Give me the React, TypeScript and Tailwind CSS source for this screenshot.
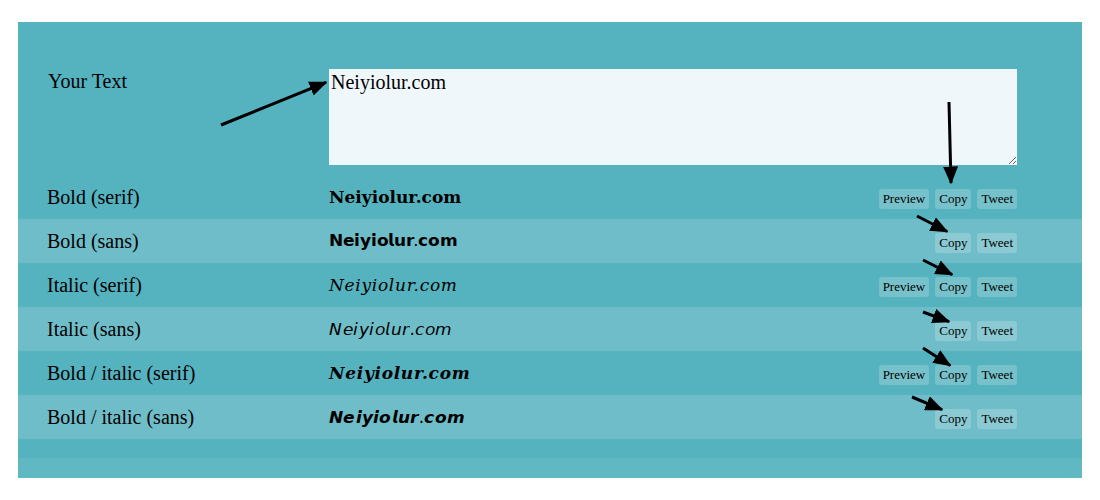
import React from "react";

type Row = {
  label: string;
  value: string;
  cls: string;
  preview: boolean;
  light: boolean;
};

const rows: Row[] = [
  { label: "Bold (serif)", value: "Neiyiolur.com", cls: "font-['DejaVu_Serif','Liberation_Serif',serif] font-bold text-[17px]", preview: true, light: false },
  { label: "Bold (sans)", value: "𝗡𝗲𝗶𝘆𝗶𝗼𝗹𝘂𝗿.𝗰𝗼𝗺", cls: "font-['DejaVu_Sans',sans-serif] text-[16.5px] tracking-[-0.3px]", preview: false, light: true },
  { label: "Italic (serif)", value: "Neiyiolur.com", cls: "font-['DejaVu_Serif','Liberation_Serif',serif] italic text-[17px] tracking-[0.7px]", preview: true, light: false },
  { label: "Italic (sans)", value: "𝘕𝘦𝘪𝘺𝘪𝘰𝘭𝘶𝘳.𝘤𝘰𝘮", cls: "font-['DejaVu_Sans',sans-serif] text-[17px] tracking-[0.5px]", preview: false, light: true },
  { label: "Bold / italic (serif)", value: "Neiyiolur.com", cls: "font-['DejaVu_Serif','Liberation_Serif',serif] font-bold italic text-[17px] tracking-[0.7px]", preview: true, light: false },
  { label: "Bold / italic (sans)", value: "𝙉𝙚𝙞𝙮𝙞𝙤𝙡𝙪𝙧.𝙘𝙤𝙢", cls: "font-['DejaVu_Sans',sans-serif] text-[17px] tracking-[0.3px]", preview: false, light: true },
];

// annotation arrows drawn over the page: [x1, y1, x2, y2]
const arrows: [number, number, number, number][] = [
  [221, 125, 327, 82],
  [949, 102, 951, 184],
  [917, 216, 948, 232],
  [923, 260, 953, 275],
  [923, 312, 950, 322],
  [923, 348, 951, 366],
  [912, 397, 943, 410],
];

const SmallButton = ({ children }: { children: React.ReactNode }) => (
  <button className="h-[20px] px-[4px] rounded-[3px] bg-white/20 text-[13px] leading-none text-black font-['Liberation_Serif',serif]">
    {children}
  </button>
);

const App = () => {
  return (
    <div className="relative w-[1100px] h-[500px] bg-white pt-[22px] px-[18px] font-['Liberation_Serif',serif] text-black">
      <div className="bg-[#55b2bf]">
        {/* input row */}
        <div className="flex pt-[47px] pb-[10px]">
          <div className="w-[311px] pl-[30px] pt-[1px] text-[20px] leading-[23px]">Your Text</div>
          <textarea
            defaultValue="Neiyiolur.com"
            className="w-[688px] h-[96px] bg-[#eff7fa] p-[2px] text-[20px] leading-[23px] font-['Liberation_Serif',serif] outline-none"
          />
        </div>

        {rows.map((r) => (
          <div key={r.label} className={`flex items-center h-[44px] ${r.light ? "bg-[#6fbdc8]" : ""}`}>
            <div className="w-[311px] pl-[29px] text-[20px]">{r.label}</div>
            <div className={`flex-1 pt-[1px] ${r.cls}`}>{r.value}</div>
            <div className="flex gap-[6px] pr-[65px] pt-[3px]">
              {r.preview && <SmallButton>Preview</SmallButton>}
              <SmallButton>Copy</SmallButton>
              <SmallButton>Tweet</SmallButton>
            </div>
          </div>
        ))}

        <div className="h-[19px]" />
        <div className="h-[20px] bg-[#5fb8c2]" />
      </div>

      <svg className="absolute left-0 top-0 pointer-events-none" width="1100" height="500">
        <defs>
          <marker id="head" markerWidth="6" markerHeight="5" refX="5.5" refY="2.5" orient="auto" markerUnits="strokeWidth">
            <path d="M0,0 L6,2.5 L0,5 Z" fill="#000" />
          </marker>
        </defs>
        {arrows.map(([x1, y1, x2, y2], i) => {
          const dx = x2 - x1;
          const dy = y2 - y1;
          const len = Math.hypot(dx, dy);
          const ex = x2 - (dx / len) * 1;
          const ey = y2 - (dy / len) * 1;
          return (
            <line key={i} x1={x1} y1={y1} x2={ex} y2={ey} stroke="#000" strokeWidth="3" markerEnd="url(#head)" />
          );
        })}
      </svg>
    </div>
  );
};

export default App;
